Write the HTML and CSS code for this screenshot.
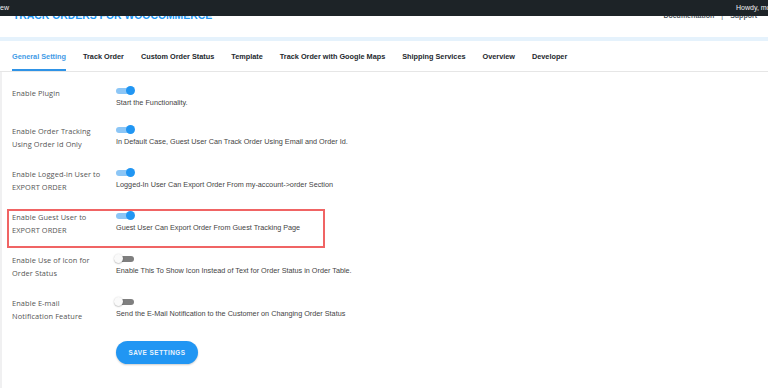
FILE: index.html
```html
<!DOCTYPE html>
<html lang="en">
<head>
<meta charset="utf-8">
<title>Track Orders for WooCommerce</title>
<link rel="stylesheet" href="styles.css">
</head>
<body>
<div class="adminbar">
  <span class="ab-left">ew</span>
  <span class="ab-right">Howdy, moderator</span>
</div>
<div class="header">
  <h1 class="title">TRACK ORDERS FOR WOOCOMMERCE</h1>
  <div class="links"><a>Documentation</a><span class="sep">|</span><a>Support</a></div>
</div>
<div class="strip"></div>
<nav class="tabs">
  <a class="tab active">General Setting</a>
  <a class="tab">Track Order</a>
  <a class="tab">Custom Order Status</a>
  <a class="tab">Template</a>
  <a class="tab">Track Order with Google Maps</a>
  <a class="tab">Shipping Services</a>
  <a class="tab">Overview</a>
  <a class="tab">Developer</a>
</nav>
<main class="content">
  <div class="row first">
    <div class="label">Enable Plugin</div>
    <div class="field"><span class="toggle on"><span class="knob"></span></span><p class="desc">Start the Functionality.</p></div>
  </div>
  <div class="row">
    <div class="label">Enable Order Tracking Using Order Id Only</div>
    <div class="field"><span class="toggle on"><span class="knob"></span></span><p class="desc">In Default Case, Guest User Can Track Order Using Email and Order Id.</p></div>
  </div>
  <div class="row">
    <div class="label">Enable Logged-in User to EXPORT ORDER</div>
    <div class="field"><span class="toggle on"><span class="knob"></span></span><p class="desc">Logged-In User Can Export Order From my-account-&gt;order Section</p></div>
  </div>
  <div class="row highlight">
    <div class="label">Enable Guest User to EXPORT ORDER</div>
    <div class="field"><span class="toggle on"><span class="knob"></span></span><p class="desc">Guest User Can Export Order From Guest Tracking Page</p></div>
  </div>
  <div class="row">
    <div class="label">Enable Use of Icon for Order Status</div>
    <div class="field"><span class="toggle"><span class="knob"></span></span><p class="desc">Enable This To Show Icon Instead of Text for Order Status in Order Table.</p></div>
  </div>
  <div class="row">
    <div class="label">Enable E-mail Notification Feature</div>
    <div class="field"><span class="toggle"><span class="knob"></span></span><p class="desc">Send the E-Mail Notification to the Customer on Changing Order Status</p></div>
  </div>
  <div class="actions">
    <button class="save">SAVE SETTINGS</button>
  </div>
</main>
</body>
</html>
```
FILE: styles.css
```css
* { box-sizing: border-box; }
html, body { margin: 0; padding: 0; }
body {
  background: #f0f0f1;
  font-family: "Liberation Sans", Arial, sans-serif;
  width: 768px;
  height: 388px;
  overflow: hidden;
  position: relative;
}
.adminbar {
  position: absolute;
  top: 0; left: 0; right: 0;
  height: 16px;
  background: #1d2327;
  color: #f0f0f1;
  font-size: 7px;
  line-height: 16px;
  z-index: 10;
  overflow: hidden;
  white-space: nowrap;
}
.ab-left { position: absolute; left: 0; top: 0; }
.ab-right { position: absolute; left: 736px; top: 0; }
.header {
  background: #fff;
  height: 37px;
  padding: 10px 11px 0 13px;
  display: flex;
  justify-content: space-between;
  align-items: flex-start;
}
.title {
  margin: 0;
  font-size: 10.4px;
  line-height: 12px;
  font-weight: 700;
  color: #2196f3;
}
.links {
  font-size: 7px;
  line-height: 12px;
  font-weight: 700;
  color: #50575e;
  display: flex;
  gap: 7px;
}
.sep { font-weight: 400; }
.strip { height: 4px; background: #e5f2fc; }
.tabs {
  background: #fff;
  height: 31px;
  display: flex;
  gap: 17px;
  padding-left: 12px;
  border-bottom: 1px solid #e6e6e6;
}
.tab {
  display: flex;
  align-items: center;
  font-size: 7.3px;
  font-weight: 700;
  color: #23282d;
  border-bottom: 2px solid transparent;
  padding-top: 2px;
  white-space: nowrap;
}
.tab.active { color: #3f9be6; border-bottom-color: #2f93e6; }
.content {
  background: #fff;
  margin-left: 2px;
  height: 316px;
  padding: 8px 0 0 5px;
}
.row {
  display: flex;
  height: 39px;
  margin-bottom: 4px;
  border: 2px solid transparent;
  padding-left: 3px;
}
.row.first { padding-top: 4px; }
.row.highlight { border-color: #f06464; width: 318px; }
.label {
  width: 104px;
  padding-right: 14px;
  flex: none;
  font-family: "Open Sans", sans-serif;
  font-size: 7.4px;
  letter-spacing: 0.1px;
  line-height: 13px;
  color: #555;
}
.row.first .label { padding-top: 1px; }
.toggle {
  display: block;
  position: relative;
  width: 19px;
  height: 9px;
}
.toggle::before {
  content: "";
  position: absolute;
  left: 0; top: 1.5px;
  width: 18px; height: 6px;
  border-radius: 3px;
  background: #7f7f7f;
}
.toggle.on::before { background: #8cc6f6; }
.knob {
  position: absolute;
  top: 0; left: -2px;
  width: 9px; height: 9px;
  border-radius: 50%;
  background: #fafafa;
  box-shadow: 0 0.5px 1.5px rgba(0,0,0,0.35);
}
.toggle.on .knob { left: 10px; background: #2196f3; box-shadow: none; }
.desc {
  margin: 3px 0 0;
  font-size: 7.25px;
  line-height: 10px;
  color: #444;
  white-space: nowrap;
}
.actions { padding-left: 109px; padding-top: 3px; }
.save {
  width: 82px;
  height: 23px;
  border: none;
  border-radius: 12px;
  background: #2196f3;
  color: #e8f3fd;
  font-family: "Liberation Sans", Arial, sans-serif;
  font-size: 6.4px;
  font-weight: 700;
  letter-spacing: 0.5px;
  box-shadow: 0 1px 2px rgba(0,0,0,0.2);
  padding: 0;
}
```
